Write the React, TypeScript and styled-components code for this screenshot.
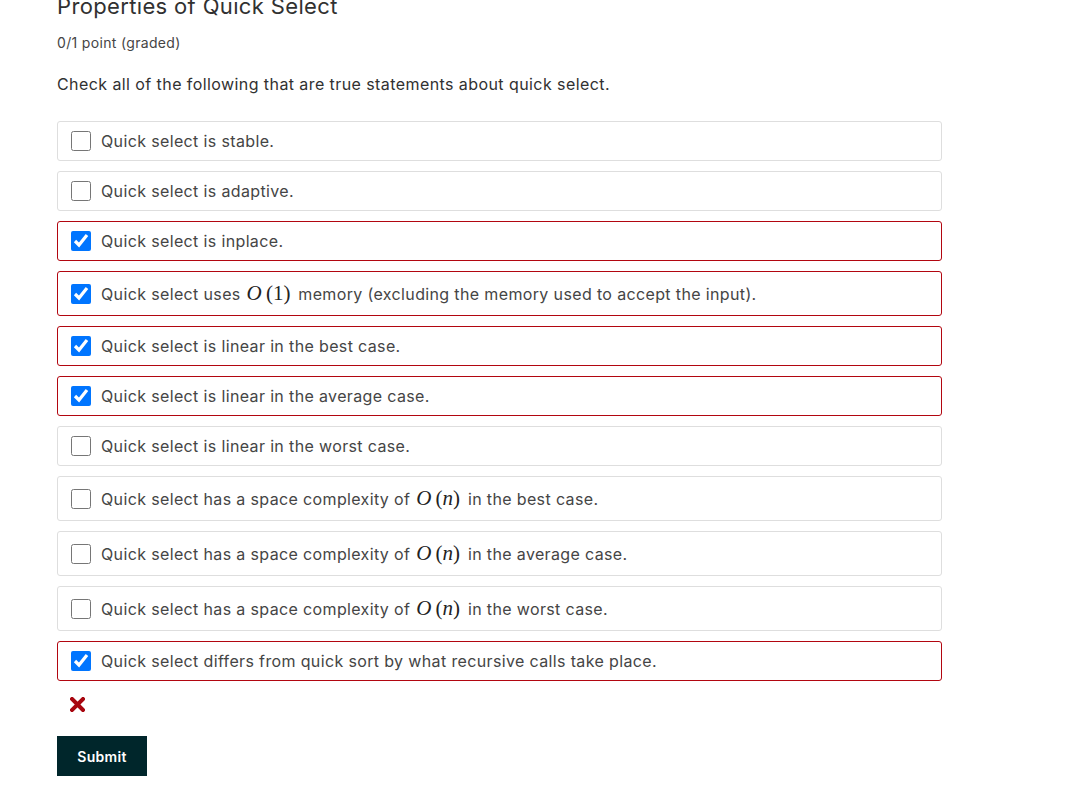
import React from "react";
import styled, { createGlobalStyle } from "styled-components";

const GlobalStyle = createGlobalStyle`
  body {
    margin: 0;
    background: #fff;
    font-family: Inter, "Noto Sans", sans-serif;
    color: #454545;
  }
`;

const Page = styled.div`
  padding: 0 0 40px 57px;
  width: 885px;
`;

const Title = styled.h3`
  margin: -9px 0 0;
  font-size: 22px;
  font-weight: 400;
  line-height: 30px;
  letter-spacing: 0.35px;
  color: #313131;
`;

const Points = styled.div`
  margin-top: 12px;
  font-size: 14px;
  line-height: 20px;
  letter-spacing: 0.33px;
  color: #454545;
`;

const Prompt = styled.p`
  margin: 20px 0 26px;
  font-size: 16px;
  line-height: 22px;
  letter-spacing: 0.42px;
  color: #313131;
`;

const Choices = styled.div`
  display: flex;
  flex-direction: column;
  gap: 10px;
`;

const Choice = styled.label<{ $wrong: boolean }>`
  display: flex;
  align-items: center;
  gap: 10px;
  padding: 8px 13px;
  min-height: 22px;
  border: 1px solid ${(p) => (p.$wrong ? "#b20610" : "#dedede")};
  border-radius: 3px;
  font-size: 16px;
  line-height: 22px;
  letter-spacing: 0.36px;
  color: #454545;
`;

const Box = styled.input`
  width: 20px;
  height: 20px;
  margin: 0;
  flex: none;
`;

const Math = styled.span`
  font-family: "Liberation Serif", "DejaVu Serif", serif;
  font-size: 21px;
  line-height: 27px;
  letter-spacing: 0;
  color: #222;
  margin: 0 3px 0 1px;
`;

const Var = styled.i`
  font-style: italic;
`;

const Status = styled.div`
  margin: 15px 0 0 13px;
  height: 17px;
`;

const SubmitButton = styled.button`
  margin-top: 23px;
  width: 90px;
  height: 40px;
  border: none;
  border-radius: 0;
  background: #00262b;
  color: #fff;
  font-family: Inter, "Noto Sans", sans-serif;
  font-size: 14px;
  font-weight: 600;
  letter-spacing: 0.3px;
  cursor: pointer;
`;

type Item = { text: React.ReactNode; checked: boolean };

const bigO = (arg: string, italic: boolean) => (
  <Math>
    <Var>O</Var>&thinsp;({italic ? <Var>{arg}</Var> : arg})
  </Math>
);

const items: Item[] = [
  { text: "Quick select is stable.", checked: false },
  { text: "Quick select is adaptive.", checked: false },
  { text: "Quick select is inplace.", checked: true },
  {
    text: (
      <>
        Quick select uses {bigO("1", false)} memory (excluding the memory used to accept the input).
      </>
    ),
    checked: true,
  },
  { text: "Quick select is linear in the best case.", checked: true },
  { text: "Quick select is linear in the average case.", checked: true },
  { text: "Quick select is linear in the worst case.", checked: false },
  {
    text: <>Quick select has a space complexity of {bigO("n", true)} in the best case.</>,
    checked: false,
  },
  {
    text: <>Quick select has a space complexity of {bigO("n", true)} in the average case.</>,
    checked: false,
  },
  {
    text: <>Quick select has a space complexity of {bigO("n", true)} in the worst case.</>,
    checked: false,
  },
  { text: "Quick select differs from quick sort by what recursive calls take place.", checked: true },
];

export default function App() {
  return (
    <Page>
      <GlobalStyle />
      <Title>Properties of Quick Select</Title>
      <Points>0/1 point (graded)</Points>
      <Prompt>Check all of the following that are true statements about quick select.</Prompt>
      <Choices>
        {items.map((it, i) => (
          <Choice key={i} $wrong={it.checked}>
            <Box type="checkbox" defaultChecked={it.checked} />
            <span>{it.text}</span>
          </Choice>
        ))}
      </Choices>
      <Status>
        <svg width="15" height="15" viewBox="0 0 15 15">
          <path d="M2 2 L13 13 M13 2 L2 13" stroke="#a8060f" strokeWidth="4" strokeLinecap="square" />
        </svg>
      </Status>
      <SubmitButton>Submit</SubmitButton>
    </Page>
  );
}
